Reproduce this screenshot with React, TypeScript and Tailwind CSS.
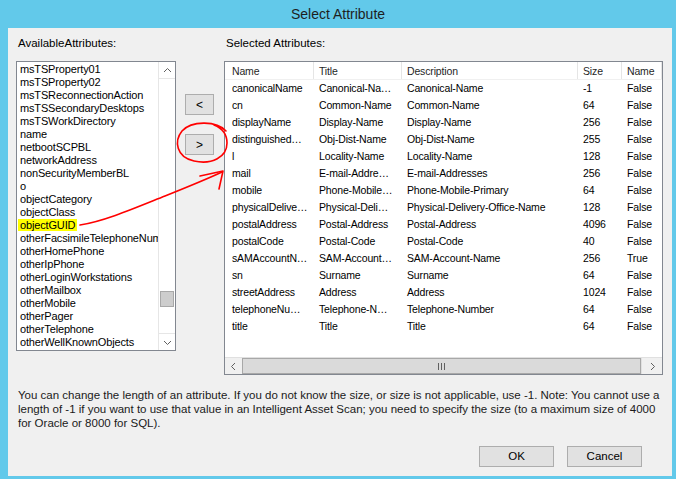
import React from 'react';

const available = [
  'msTSProperty01',
  'msTSProperty02',
  'msTSReconnectionAction',
  'msTSSecondaryDesktops',
  'msTSWorkDirectory',
  'name',
  'netbootSCPBL',
  'networkAddress',
  'nonSecurityMemberBL',
  'o',
  'objectCategory',
  'objectClass',
  'objectGUID',
  'otherFacsimileTelephoneNumber',
  'otherHomePhone',
  'otherIpPhone',
  'otherLoginWorkstations',
  'otherMailbox',
  'otherMobile',
  'otherPager',
  'otherTelephone',
  'otherWellKnownObjects',
];

const rows: Array<[string, string, string, string, string]> = [
  ['canonicalName', 'Canonical-Na…', 'Canonical-Name', '-1', 'False'],
  ['cn', 'Common-Name', 'Common-Name', '64', 'False'],
  ['displayName', 'Display-Name', 'Display-Name', '256', 'False'],
  ['distinguished…', 'Obj-Dist-Name', 'Obj-Dist-Name', '255', 'False'],
  ['l', 'Locality-Name', 'Locality-Name', '128', 'False'],
  ['mail', 'E-mail-Addre…', 'E-mail-Addresses', '256', 'False'],
  ['mobile', 'Phone-Mobile…', 'Phone-Mobile-Primary', '64', 'False'],
  ['physicalDelive…', 'Physical-Deli…', 'Physical-Delivery-Office-Name', '128', 'False'],
  ['postalAddress', 'Postal-Address', 'Postal-Address', '4096', 'False'],
  ['postalCode', 'Postal-Code', 'Postal-Code', '40', 'False'],
  ['sAMAccountN…', 'SAM-Account…', 'SAM-Account-Name', '256', 'True'],
  ['sn', 'Surname', 'Surname', '64', 'False'],
  ['streetAddress', 'Address', 'Address', '1024', 'False'],
  ['telephoneNu…', 'Telephone-N…', 'Telephone-Number', '64', 'False'],
  ['title', 'Title', 'Title', '64', 'False'],
];

// column widths + left padding of the text
const cols = [
  { w: 'w-[89px]', pl: 'pl-[7px]' },
  { w: 'w-[88px]', pl: 'pl-[5px]' },
  { w: 'w-[176px]', pl: 'pl-[5px]' },
  { w: 'w-[44px]', pl: 'pl-[5px]' },
  { w: 'w-[40px]', pl: 'pl-[5px]' },
];

const Chevron = ({ dir }: { dir: 'up' | 'down' | 'left' | 'right' }) => {
  const pts = {
    up: '5,10 8.5,6.5 12,10',
    down: '5,7 8.5,10.5 12,7',
    left: '10,5 6.5,8.5 10,12',
    right: '7,5 10.5,8.5 7,12',
  }[dir];
  return (
    <svg width="17" height="17" viewBox="0 0 17 17">
      <polyline points={pts} fill="none" stroke="#606060" strokeWidth="1" />
    </svg>
  );
};

export default function App() {
  return (
    <div
      className="relative w-[676px] h-[479px] bg-[#62c9ea] flex flex-col text-[#000] overflow-hidden"
      style={{ fontFamily: '"Liberation Sans", Arial, sans-serif' }}
    >
      {/* Title bar */}
      <div className="h-[28px] flex items-center justify-center text-[14px] text-[#1e1e1e]">
        Select Attribute
      </div>

      {/* Dialog body */}
      <div className="flex-1 ml-[8px] mr-[4px] mb-[3px] bg-[#f0f0f0] flex flex-col pl-[8px] pt-[8px]">
        <div className="flex items-start">
          {/* Available attributes */}
          <div className="w-[160px] flex flex-col">
            <div className="h-[15px] leading-[15px] pl-[2px] text-[11.5px]">AvailableAttributes:</div>
            <div className="mt-[10px] h-[290px] border border-[#828790] bg-white flex">
              <div className="flex-1 overflow-hidden pt-[1px] text-[11px] tracking-[-0.15px]">
                {available.map((a) => (
                  <div key={a} className="h-[13px] leading-[13px] pl-[1px] whitespace-nowrap">
                    <span className={a === 'objectGUID' ? 'bg-[#ffff00] px-[2px]' : 'px-[2px]'}>{a}</span>
                  </div>
                ))}
              </div>
              <div className="w-[17px] border-l border-[#e6e6e6] flex flex-col">
                <div className="h-[17px] border-b border-[#e6e6e6]">
                  <Chevron dir="up" />
                </div>
                <div className="flex-1 flex flex-col pt-[212px]">
                  <div className="h-[16px] mx-[1px] bg-[#cdcdcd] border border-[#a8a8a8]" />
                </div>
                <div className="h-[17px] border-t border-[#e6e6e6]">
                  <Chevron dir="down" />
                </div>
              </div>
            </div>
          </div>

          {/* Move buttons */}
          <div className="ml-[9px] w-[29px] flex flex-col pt-[58px]">
            <button className="h-[21px] bg-[#e1e1e1] border border-[#adadad] text-[12px] leading-none">&lt;</button>
            <button className="mt-[19px] h-[21px] bg-[#e1e1e1] border border-[#adadad] text-[12px] leading-none">&gt;</button>
          </div>

          {/* Selected attributes */}
          <div className="ml-[10px] w-[439px] flex flex-col">
            <div className="h-[15px] leading-[15px] pl-[2px] text-[11.5px]">Selected Attributes:</div>
            <div className="mt-[10px] h-[314px] border border-[#828790] bg-white flex flex-col text-[10.5px] tracking-[-0.15px]">
              <div className="h-[18px] flex border-b border-[#f0f0f0] text-[#1f1f1f]">
                {['Name', 'Title', 'Description', 'Size', 'Name'].map((h, i) => (
                  <div
                    key={i}
                    className={`${cols[i].w} ${cols[i].pl} leading-[18px] border-r border-[#e5e5e5] whitespace-nowrap`}
                  >
                    {h}
                  </div>
                ))}
              </div>
              <div className="flex-1">
                {rows.map((r, ri) => (
                  <div key={ri} className="h-[17px] flex">
                    {r.map((c, ci) => (
                      <div
                        key={ci}
                        className={`${cols[ci].w} ${cols[ci].pl} leading-[17px] whitespace-nowrap overflow-hidden`}
                      >
                        {c}
                      </div>
                    ))}
                  </div>
                ))}
              </div>
              <div className="h-[17px] flex bg-[#f0f0f0] border-t border-[#e0e0e0]">
                <div className="w-[17px]">
                  <Chevron dir="left" />
                </div>
                <div className="flex-1 border border-[#a8a8a8] bg-[#dadada] flex items-center justify-center">
                  <svg width="7" height="7" viewBox="0 0 7 7">
                    <path d="M0.5 0 V7 M3.5 0 V7 M6.5 0 V7" stroke="#606060" strokeWidth="1" />
                  </svg>
                </div>
                <div className="w-[21px] border-l border-[#e0e0e0] flex justify-center">
                  <Chevron dir="right" />
                </div>
              </div>
            </div>
          </div>
        </div>

        {/* Note */}
        <p className="mt-[13px] pl-[2px] text-[11.5px] leading-[14px] whitespace-nowrap text-[#1a1a1a]">
          You can change the length of an attribute. If you do not know the size, or size is not applicable, use -1. Note: You cannot use a
          <br />
          length of -1 if you want to use that value in an Intelligent Asset Scan; you need to specify the size (to a maximum size of 4000
          <br />
          for Oracle or 8000 for SQL).
        </p>

        {/* OK / Cancel */}
        <div className="mt-[16px] flex justify-end mr-[30px] gap-[13px]">
          <button className="w-[75px] h-[21px] bg-[#e1e1e1] border border-[#adadad] text-[11.5px]">OK</button>
          <button className="w-[75px] h-[21px] bg-[#e1e1e1] border border-[#adadad] text-[11.5px]">Cancel</button>
        </div>
      </div>

      {/* Red hand-drawn annotations */}
      <svg className="absolute left-0 top-0 pointer-events-none" width="676" height="479" viewBox="0 0 676 479">
        <g fill="none" stroke="#ff0000" strokeWidth="1.6" strokeLinecap="round" strokeLinejoin="round">
          <path d="M226 131 C217 121 192 120 182 131 C174 141 176 157 194 161 C212 165 227 157 227 143 C227 135 224 129 214 125" />
          <path d="M80 225 C105 221 135 208 165 196 C185 188 205 180 222 172" />
          <path d="M200 176 L223 171 L219 189" />
        </g>
      </svg>
    </div>
  );
}
